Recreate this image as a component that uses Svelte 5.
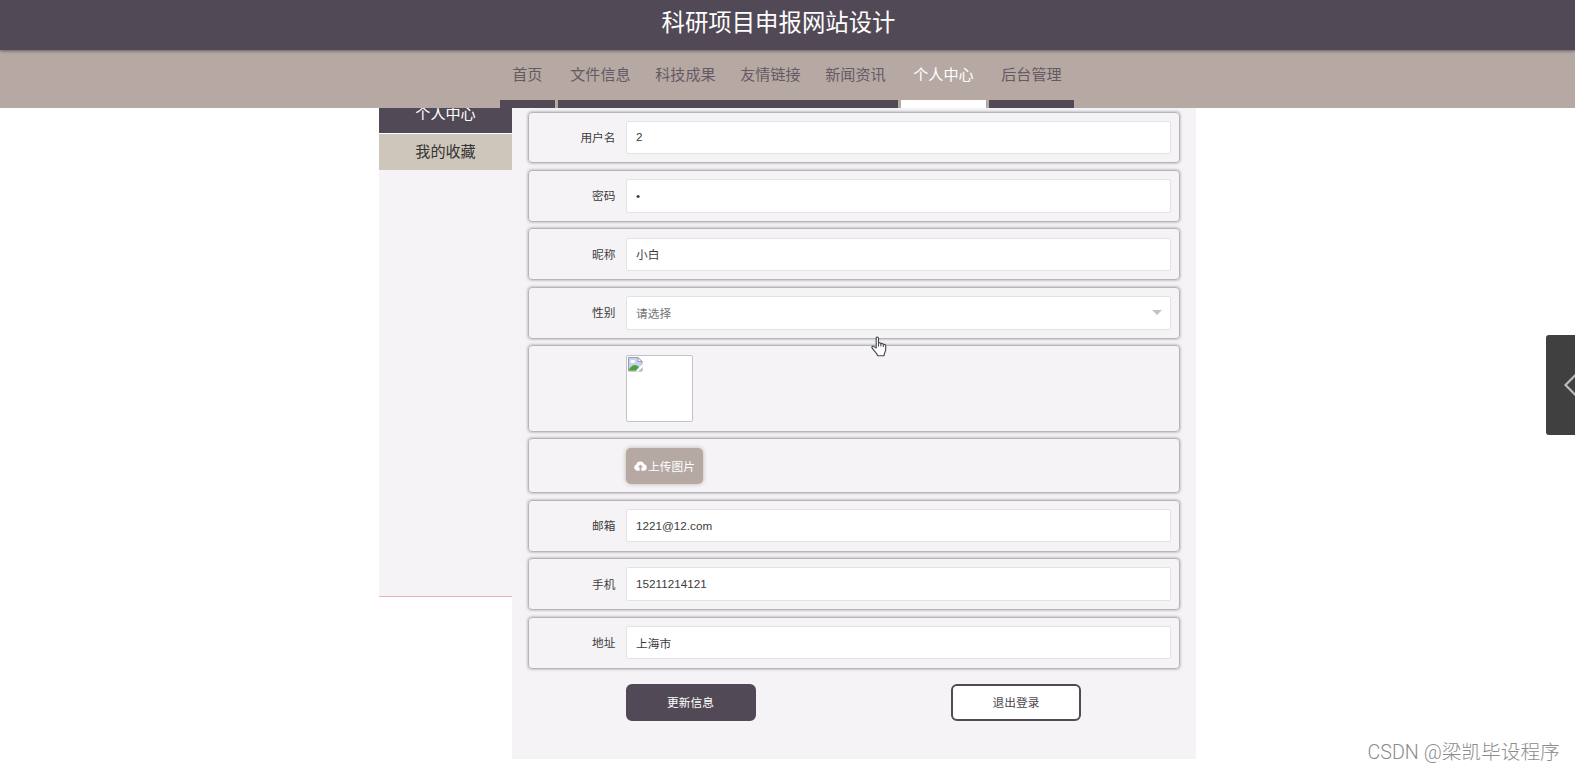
<script>
  const nav = [
    ['首页'],
    ['文件信息', '科技成果', '友情链接', '新闻资讯'],
    ['个人中心'],
    ['后台管理'],
  ];
  const top = [
    { label: '用户名', value: '2' },
    { label: '密码', value: '•' },
    { label: '昵称', value: '小白' },
    { label: '性别', value: '请选择', select: true },
  ];
  const bottom = [
    { label: '邮箱', value: '1221@12.com' },
    { label: '手机', value: '15211214121' },
    { label: '地址', value: '上海市' },
  ];
</script>

{#snippet field(f)}
  <div class="row">
    <span class="label">{f.label}</span>
    <div class="input" class:select={f.select}>
      <span>{f.value}</span>
      {#if f.select}<i class="caret"></i>{/if}
    </div>
  </div>
{/snippet}

<div class="page">
  <header><h1>科研项目申报网站设计</h1></header>
  <nav>
    {#each nav as group}
      <div class="group" class:active={group[0] === '个人中心'}>
        {#each group as item}<span class="item">{item}</span>{/each}
      </div>
    {/each}
  </nav>

  <div class="content">
    <aside>
      <div class="side on">个人中心</div>
      <div class="side">我的收藏</div>
    </aside>
    <main>
      {#each top as f}{@render field(f)}{/each}
      <div class="row avatar-row">
        <div class="avatar">
          <svg width="15" height="15" viewBox="0 0 15 15">
            <path d="M.5 .5h9.500l4 4v9.500H.5z" fill="#c3d4f3" stroke="#98a0a6" />
            <path d="M10 .5v4h4z" fill="#fff" stroke="#98a0a6" />
            <ellipse cx="4.800" cy="4.500" rx="2.600" ry="1.400" fill="#fff" />
            <path d="M1 13.500V12.500Q5.500 5 11 10L8 13.500z" fill="#4fa03b" />
            <path d="M15 6.500L7.500 14.500H10.200L15 9.800z" fill="#fff" />
          </svg>
        </div>
      </div>
      <div class="row upload-row">
        <div class="upload">
          <svg width="13" height="10" viewBox="0 0 12 9">
            <path d="M3 8.800A2.900 2.900 0 0 1 2.100 3.200A3.800 3.800 0 0 1 9.400 2.900A3 3 0 0 1 9.300 8.800z" fill="#fff" />
            <path d="M6 3L8.500 5.700H6.800V9H5.200V5.700H3.500z" fill="#b6a9a3" />
          </svg>
          <span>上传图片</span>
        </div>
      </div>
      {#each bottom as f}{@render field(f)}{/each}
      <div class="actions">
        <div class="btn primary"><span>更新信息</span></div>
        <div class="btn"><span>退出登录</span></div>
      </div>
    </main>
  </div>

  <div class="drawer">
    <svg width="11" height="22" viewBox="0 0 11 22"><path d="M12 .5L1.500 11L12 21.500" fill="none" stroke="#bdbdbd" stroke-width="2.200" /></svg>
  </div>
  <svg class="cursor" width="16" height="21" viewBox="0 0 16 21">
    <path d="M5.200 12V2.200C5.200 .5 7.500 .5 7.500 2.200V7.500C8 6.400 9.800 6.600 9.900 8C10.600 7 12.200 7.400 12.300 8.700C13.300 8 14.700 8.600 14.700 10V13.500C14.700 15.500 13.300 16.500 13 19.700H6.600C6.200 17.500 3.600 15.500 1.200 12.100C.3 10.800 1.800 9.700 3 10.600z" fill="#fff" stroke="#444" stroke-width="1.100" stroke-linejoin="round" />
    <path d="M7.500 7.500V10.500M9.900 8V10.500M12.300 8.700V11" stroke="#444" stroke-width="1" />
  </svg>
  <div class="mark">CSDN @梁凯毕设程序</div>
</div>

<style>
  :global(body) { margin: 0; background: #fff; }
  .page {
    position: relative; width: 1575px; height: 771px; overflow: hidden;
    font-family: "Liberation Sans", "Noto Sans CJK SC", sans-serif;
    font-size: 11.7px; color: #3c3c3c;
  }
  .page * { box-sizing: border-box; }
  header {
    position: relative; z-index: 3; height: 50px; background: #524956;
    box-shadow: 0 1px 3px rgba(50, 40, 50, .6);
    display: flex; justify-content: center; padding-right: 18px;
  }
  h1 { margin: 0; font-size: 23.400px; font-weight: 400; line-height: 47px; color: #fff; }
  nav {
    position: relative; z-index: 2; height: 58.400px; background: #b6a9a3;
    display: flex; gap: 3px; padding-left: 500px;
  }
  .group { display: flex; border-bottom: 8px solid #524956; color: #665963; }
  .group.active { border-color: #fff; color: #fff; }
  .item { padding: 0 12.200px; font-size: 15.100px; line-height: 50px; width: 85px; white-space: nowrap; }
  .group:first-child .item { width: 55px; }
  .content { display: flex; align-items: flex-start; margin: -12.400px 0 0 379px; }
  aside { width: 133px; height: 501px; background: #f5f3f6; border-bottom: 1px solid #ecb2b5; }
  .side {
    height: 36.500px; line-height: 36px; text-align: center; font-size: 15.100px;
    background: #cfc6bb; margin-bottom: 1px; color: #333;
  }
  .on { background: #524956; color: #fff; box-shadow: 0 1px #fff; }
  main {
    width: 683.500px; height: 663px; background: #f5f3f6;
    padding: 15.500px 15.500px 0 16px; display: flex; flex-direction: column; gap: 6.500px;
  }
  .row {
    height: 51.950px; border-radius: 4px; flex: none; display: flex; align-items: center;
    border: 1px solid #b5b5ba; box-shadow: 0 0 3px rgba(80, 80, 85, .55); padding: 0 8.500px 0 0;
  }
  .label { width: 86.500px; margin-right: 10.500px; padding-bottom: 2px; text-align: right; }
  .input {
    flex: 1; height: 33.500px; border: 1px solid #e3e2e5; border-radius: 2px; background: #fff;
    padding: 0 9px; display: flex; align-items: center; justify-content: space-between;
  }
  .input span { padding-bottom: 1px; }
  .select { color: #757575; padding-right: 8px; }
  .caret { border: 5px solid transparent; border-top-color: #c2c2c2; margin-top: 5px; }
  .avatar-row { height: 86.500px; padding-left: 97px; }
  .avatar { width: 67px; height: 67px; border: 1px solid #c3c3c5; border-radius: 2px; background: #fff; padding: 1px; }
  .avatar svg { display: block; }
  .upload-row { height: 55px; padding-left: 97px; }
  .upload {
    width: 77px; height: 36.500px; border-radius: 5px; background: #b6a9a3; color: #fff;
    box-shadow: 0 0 4px rgba(160, 140, 125, .65); display: flex; align-items: center; justify-content: center; gap: 1px;
  }
  .upload span { padding-bottom: 1px; }
  .actions { display: flex; justify-content: space-between; padding: 9px 99px 0 97.500px; }
  .btn {
    width: 130px; height: 36.500px; border: 2px solid #524956; border-radius: 6px; background: #fff;
    display: flex; align-items: center; justify-content: center; color: #4c434f;
  }
  .btn span { padding-bottom: 2px; }
  .primary { background: #524956; color: #fff; }
  .drawer {
    position: absolute; right: 0; top: 335px; width: 29px; height: 100px; background: #404040;
    border-radius: 3px 0 0 3px; display: flex; align-items: center; justify-content: flex-end;
  }
  .cursor { position: absolute; left: 871px; top: 336px; }
  .mark {
    position: absolute; left: 1367.500px; top: 738px; font-family: Roboto, "Noto Sans CJK SC", sans-serif;
    font-size: 19.700px; line-height: 29px; white-space: nowrap;
    color: #8c8c8c; text-shadow: -1px -1px 1px #fff; font-weight: 300;
  }
</style>
